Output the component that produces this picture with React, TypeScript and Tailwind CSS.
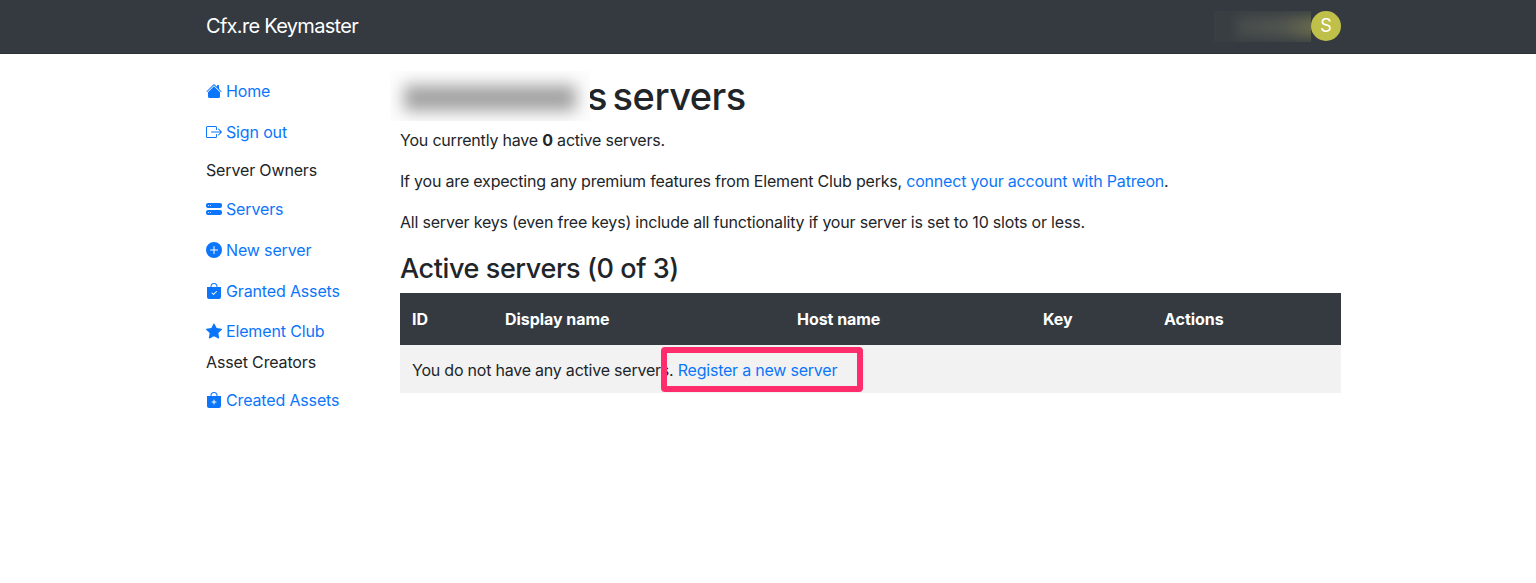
import React from "react";
import {
  BsHouseFill,
  BsBoxArrowRight,
  BsHddStackFill,
  BsPlusCircleFill,
  BsBagCheckFill,
  BsStarFill,
  BsBagPlusFill,
} from "react-icons/bs";
import type { IconType } from "react-icons";

const SideLink = ({
  icon: Icon,
  label,
  className,
}: {
  icon: IconType;
  label: string;
  className: string;
}) => (
  <a href="#" className={`flex items-center gap-[4px] text-[#0b76fb] ${className}`}>
    <Icon className="w-[16px] h-[16px] shrink-0" />
    <span>{label}</span>
  </a>
);

const SideTitle = ({ label, className }: { label: string; className: string }) => (
  <div className={`text-[#212529] ${className}`}>{label}</div>
);

export default function App() {
  return (
    <div className="min-h-[583px] bg-white text-[16px] leading-[24px] text-[#212529] font-['Inter','Liberation_Sans',sans-serif] tracking-[-0.2px]">
      <header className="h-[54px] bg-[#343a40] border-b border-[#2c3036]">
        <div className="w-[1135px] ml-[206px] h-full pb-[1px] flex items-center justify-between">
          <a href="#" className="text-[20px] text-white tracking-[-0.7px]">
            Cfx.re Keymaster
          </a>
          <div className="flex items-center">
            <div className="w-[97px] h-[31px] overflow-hidden bg-[#383e42]">
              <div className="w-[92px] h-[22px] mt-[5px] ml-[22px] bg-gradient-to-r from-[#464b4c] via-[#50544f] to-[#747648] blur-[6px]" />
            </div>
            <div className="w-[30px] h-[30px] rounded-full bg-[#bfc04a] text-white text-[18px] flex items-center justify-center">
              S
            </div>
          </div>
        </div>
      </header>

      <div className="flex w-[1135px] ml-[206px]">
        <nav className="w-[194px] shrink-0 pt-[25px] tracking-[-0.15px]">
          <SideLink icon={BsHouseFill} label="Home" className="mb-[17px]" />
          <SideLink icon={BsBoxArrowRight} label="Sign out" className="mb-[14px]" />
          <SideTitle label="Server Owners" className="mb-[15px]" />
          <SideLink icon={BsHddStackFill} label="Servers" className="mb-[17px]" />
          <SideLink icon={BsPlusCircleFill} label="New server" className="mb-[17px]" />
          <SideLink icon={BsBagCheckFill} label="Granted Assets" className="mb-[16px]" />
          <SideLink icon={BsStarFill} label="Element Club" className="mb-[7px]" />
          <SideTitle label="Asset Creators" className="mb-[14px]" />
          <SideLink icon={BsBagPlusFill} label="Created Assets" className="" />
        </nav>

        <main className="flex-1 min-w-0">
          <div className="flex items-center h-[50px] mt-[17px] mb-[7px]">
            <div className="relative z-10 w-[200px] h-[50px] ml-[-10px] overflow-hidden bg-[#fdfdfd] shrink-0">
              <div className="w-[172px] h-[26px] mt-[14px] ml-[14px] bg-[#a2a2a2] blur-[8px]" />
            </div>
            <h1 className="ml-[-3px] text-[38px] leading-[48px] font-medium tracking-[-0.5px] [word-spacing:-4px] whitespace-nowrap">s servers</h1>
          </div>
          <p className="mb-[17px]">
            You currently have <b className="font-bold">0</b> active servers.
          </p>
          <p className="mb-[17px]">
            If you are expecting any premium features from Element Club perks,{" "}
            <a href="#" className="text-[#0b76fb]">connect your account with Patreon</a>.
          </p>
          <p className="mb-[17px]">
            All server keys (even free keys) include all functionality if your server is set to 10 slots or less.
          </p>
          <h2 className="pt-[1px] text-[27px] leading-[34px] font-medium tracking-[-0.4px] mb-[7px]">Active servers (0 of 3)</h2>

          <div className="relative">
            <table className="w-full table-fixed border-collapse">
              <colgroup>
                <col className="w-[93px]" />
                <col className="w-[292px]" />
                <col className="w-[246px]" />
                <col className="w-[121px]" />
                <col />
              </colgroup>
              <thead className="bg-[#343a40] text-white tracking-[-0.05px]">
                <tr className="h-[52px] text-left">
                  <th className="px-[12px] font-bold">ID</th>
                  <th className="px-[12px] font-bold">Display name</th>
                  <th className="px-[12px] font-bold">Host name</th>
                  <th className="px-[12px] font-bold">Key</th>
                  <th className="px-[12px] font-bold">Actions</th>
                </tr>
              </thead>
              <tbody>
                <tr className="h-[48px] bg-[#f2f2f2]">
                  <td colSpan={5} className="px-[12px] pt-[1px] tracking-[-0.22px]">
                    You do not have any active servers.{" "}
                    <a href="#" className="text-[#0b76fb]">Register a new server</a>
                  </td>
                </tr>
              </tbody>
            </table>
            <div className="absolute left-[261px] top-[54px] w-[202px] h-[45px] border-[6px] border-[#ff2d6b] rounded-[4px]" />
          </div>
        </main>
      </div>
    </div>
  );
}
